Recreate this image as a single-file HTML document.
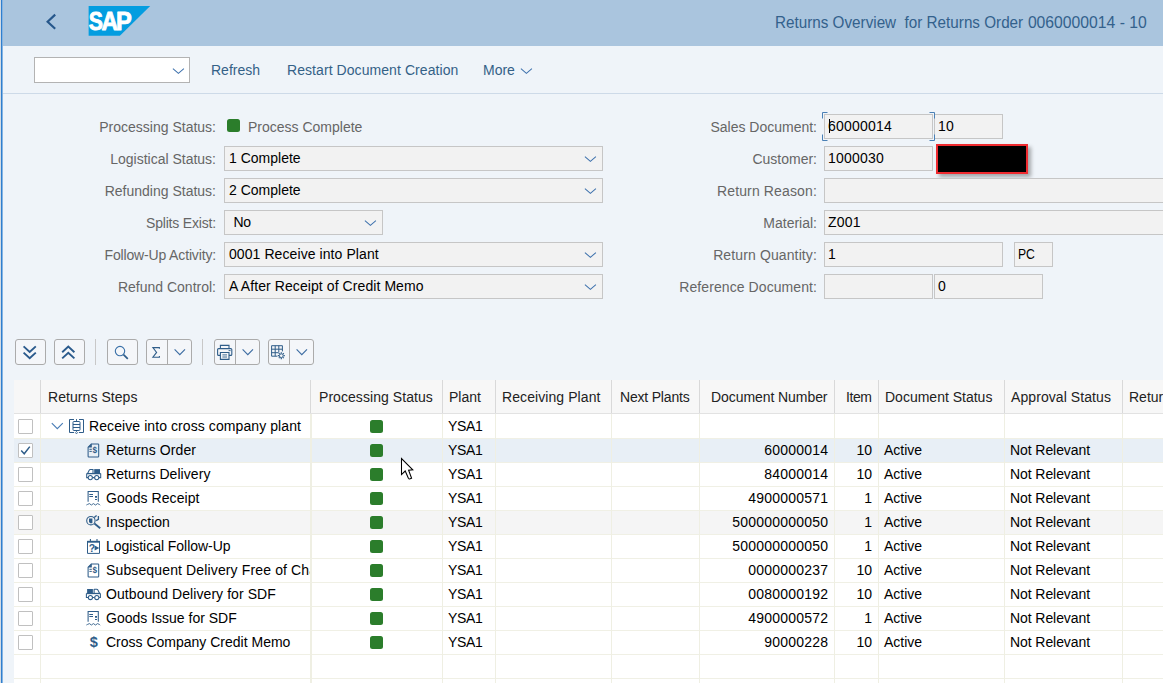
<!DOCTYPE html>
<html>
<head>
<meta charset="utf-8">
<title>Returns Overview</title>
<style>
*{box-sizing:border-box;margin:0;padding:0}
html,body{width:1163px;height:683px;overflow:hidden;background:#eff4f9}
body{font-family:"Liberation Sans",sans-serif;font-size:14px;color:#000;position:relative}
.abs{position:absolute}
#edge0{left:0;top:0;width:3px;height:683px;background:#d3dbe4}
#edge1{left:1px;top:0;width:2px;height:683px;background:linear-gradient(to right,#2f7fce 0,#2f7fce 1px,#86b4e2 1px,#86b4e2 2px)}
#hdr{left:3px;top:0;width:1160px;height:46px;background:#aac5de}
.ttl{top:11.5px;font-size:16.5px;color:#33618c;white-space:pre;line-height:20px}
#tbar{left:3px;top:46px;width:1160px;height:48px;background:#eff4f9;border-bottom:1px solid #cddae8}
#cmd{left:34px;top:57px;width:156px;height:26px;background:#fff;border:1px solid #b3b3b3}
.tb{top:61px;color:#346187;font-size:14px;line-height:18px;white-space:nowrap}
.lbl{color:#666;text-align:right;white-space:nowrap;line-height:18px;font-size:14px}
.sel{background:#f2f2f2;border:1px solid #c6c6c6;height:25px;line-height:22px;padding-left:4px;white-space:nowrap;font-size:14px}
.inp{background:#f2f2f2;border:1px solid #c6c6c6;height:25px;line-height:22px;padding-left:3px;white-space:nowrap;font-size:14px;overflow:hidden;letter-spacing:0.22px}
.gsq{width:13px;height:13px;background:#2b7d2b;border-radius:2.5px}
.btn{top:339px;height:26px;border:1px solid #ababab;border-radius:3px;background:#f4f6f9}
.vsep{top:339px;width:1px;height:26px;background:#c8c8c8}
#grid{left:14px;top:380px;width:1149px;height:303px;background:#fff;overflow:hidden}
#ghead{left:0;top:0;width:1149px;height:34px;background:#f7f7f7;border-bottom:1px solid #e2e2e2}
.th{top:8px;line-height:18px;white-space:nowrap;font-size:14px;color:#222}
.row{left:0;width:1149px;height:24px;border-bottom:1px solid #f0f0e5}
.row.selr{background:#e8eff6}
.row.alt{background:#f5f5f5}
.vl{top:34px;width:1px;height:269px;background:#efefe3}
.vlh{top:0;width:1px;height:33px;background:#d9d9d9}
.c{top:2px;line-height:18px;white-space:nowrap;font-size:14px}
.cb{left:4px;top:4px;width:15px;height:15px;border:1px solid #c0c0c0;background:#fff;border-radius:1px}
</style>
</head>
<body>
<div class="abs" id="edge0"></div>
<div class="abs" id="edge1"></div>
<div class="abs" id="hdr"></div>
<div class="abs" id="tbar"></div>
<svg class="abs" style="left:44px;top:12px" width="16" height="20" viewBox="0 0 16 20"><path d="M11.2 2.6 L3.6 9.7 L11.2 16.8" fill="none" stroke="#26578b" stroke-width="2.15" stroke-linecap="butt" stroke-linejoin="miter"/></svg>
<svg class="abs" style="left:88px;top:6px" width="63" height="31" viewBox="0 0 63 31"><path d="M0.6 0 H62.2 L31.9 29.8 H0.6 Z" fill="#039de0"/><g font-family="Liberation Sans, sans-serif" font-weight="bold" font-size="26.6" fill="#fff" stroke="#fff" stroke-width="0.9" stroke-linejoin="round"><text transform="translate(0.7,24) scale(0.80,1)">S</text><text transform="translate(13.4,24) scale(0.86,1)">A</text><text transform="translate(27.9,24) scale(0.89,1)">P</text></g></svg>
<div class="abs ttl" style="left:775.4px;transform:scaleX(0.9237);transform-origin:0 50%">Returns Overview  for Returns Order </div><div class="abs ttl" style="right:16.3px;transform:scaleX(0.9529);transform-origin:100% 50%">0060000014 - 10</div>

<div class="abs" id="cmd"></div>
<svg class="abs" style="left:171px;top:64.5px" width="14" height="12" viewBox="0 0 14 12"><path d="M1.9 3.6 L7.4 8.3 L12.9 3.6" fill="none" stroke="#3f72ad" stroke-width="1.05"/></svg>
<div class="abs tb" style="left:211px">Refresh</div>
<div class="abs tb" style="left:287px;letter-spacing:0.07px">Restart Document Creation</div>
<div class="abs tb" style="left:483px">More</div>
<svg class="abs" style="left:519px;top:64.5px" width="14" height="12" viewBox="0 0 14 12"><path d="M1.9 3.6 L7.4 8.3 L12.9 3.6" fill="none" stroke="#3f72ad" stroke-width="1.05"/></svg>

<div class="abs lbl" style="left:40px;width:176px;top:118px">Processing Status:</div>
<div class="abs gsq" style="left:227px;top:119px"></div>
<div class="abs" style="left:248px;top:118px;color:#666;line-height:18px;white-space:nowrap">Process Complete</div>
<div class="abs lbl" style="left:40px;width:176px;top:150px">Logistical Status:</div>
<div class="abs sel" style="left:224px;top:146px;width:379px">1 Complete</div>
<div class="abs lbl" style="left:40px;width:176px;top:182px">Refunding Status:</div>
<div class="abs sel" style="left:224px;top:178px;width:379px">2 Complete</div>
<div class="abs lbl" style="left:40px;width:176px;top:214px;letter-spacing:-0.18px">Splits Exist:</div>
<div class="abs sel" style="left:224px;top:210px;width:159px;padding-left:8.5px;letter-spacing:-0.4px">No</div>
<div class="abs lbl" style="left:40px;width:176px;top:246px;letter-spacing:-0.15px">Follow-Up Activity:</div>
<div class="abs sel" style="left:224px;top:242px;width:379px;letter-spacing:0.08px">0001 Receive into Plant</div>
<div class="abs lbl" style="left:40px;width:176px;top:278px">Refund Control:</div>
<div class="abs sel" style="left:224px;top:274px;width:379px;letter-spacing:0.08px">A After Receipt of Credit Memo</div>
<svg class="abs" style="left:583px;top:153px" width="14" height="12" viewBox="0 0 14 12"><path d="M1.9 3.6 L7.4 8.3 L12.9 3.6" fill="none" stroke="#3f72ad" stroke-width="1.05"/></svg>
<svg class="abs" style="left:583px;top:185px" width="14" height="12" viewBox="0 0 14 12"><path d="M1.9 3.6 L7.4 8.3 L12.9 3.6" fill="none" stroke="#3f72ad" stroke-width="1.05"/></svg>
<svg class="abs" style="left:363px;top:217px" width="14" height="12" viewBox="0 0 14 12"><path d="M1.9 3.6 L7.4 8.3 L12.9 3.6" fill="none" stroke="#3f72ad" stroke-width="1.05"/></svg>
<svg class="abs" style="left:583px;top:249px" width="14" height="12" viewBox="0 0 14 12"><path d="M1.9 3.6 L7.4 8.3 L12.9 3.6" fill="none" stroke="#3f72ad" stroke-width="1.05"/></svg>
<svg class="abs" style="left:583px;top:281px" width="14" height="12" viewBox="0 0 14 12"><path d="M1.9 3.6 L7.4 8.3 L12.9 3.6" fill="none" stroke="#3f72ad" stroke-width="1.05"/></svg>
<div class="abs lbl" style="left:640px;width:177px;top:118px">Sales Document:</div>
<div class="abs inp" style="left:824px;top:114px;width:109px">60000014</div>
<div class="abs inp" style="left:934px;top:114px;width:69px">10</div>
<svg class="abs" style="left:821px;top:111px" width="115" height="31" viewBox="0 0 115 31"><path d="M6.5 1.5 H1.5 V7.5 M1.5 23.5 V29.5 H6.5 M108.5 1.5 H113.5 V7.5 M113.5 23.5 V29.5 H108.5" fill="none" stroke="#4a80b5" stroke-width="1"/><path d="M8.5 8 V22" stroke="#000" stroke-width="1"/></svg>
<div class="abs lbl" style="left:640px;width:177px;top:150px">Customer:</div>
<div class="abs inp" style="left:824px;top:146px;width:109px">1000030</div>
<div class="abs" style="left:936px;top:144px;width:92px;height:30px;background:#000;border:2px solid #ef2b30;box-shadow:3px 3px 4px rgba(0,0,0,0.32)"></div>
<div class="abs lbl" style="left:640px;width:177px;top:182px;letter-spacing:0.14px">Return Reason:</div>
<div class="abs inp" style="left:824px;top:178px;width:345px"></div>
<div class="abs lbl" style="left:640px;width:177px;top:214px">Material:</div>
<div class="abs inp" style="left:824px;top:210px;width:345px">Z001</div>
<div class="abs lbl" style="left:640px;width:177px;top:246px;letter-spacing:0.12px">Return Quantity:</div>
<div class="abs inp" style="left:824px;top:242px;width:179px">1</div>
<div class="abs inp" style="left:1014px;top:242px;width:39px;letter-spacing:0"><span style="display:inline-block;transform:scaleX(0.87);transform-origin:0 50%">PC</span></div>
<div class="abs lbl" style="left:640px;width:177px;top:278px;letter-spacing:0.08px">Reference Document:</div>
<div class="abs inp" style="left:824px;top:274px;width:109px"></div>
<div class="abs inp" style="left:934px;top:274px;width:109px">0</div>


<div class="abs btn" style="left:15px;width:31px"></div>
<div class="abs btn" style="left:54px;width:31px"></div>
<div class="abs vsep" style="left:95px"></div>
<div class="abs btn" style="left:107px;width:31px"></div>
<div class="abs btn" style="left:146px;width:46px"></div><div class="abs vsep" style="left:167px;background:#ababab"></div>
<div class="abs vsep" style="left:202px"></div>
<div class="abs btn" style="left:214px;width:46px"></div><div class="abs vsep" style="left:235px;background:#ababab"></div>
<div class="abs btn" style="left:268px;width:46px"></div><div class="abs vsep" style="left:289px;background:#ababab"></div>
<svg class="abs" style="left:0;top:339px" width="330" height="26" viewBox="0 339 330 26">
<g fill="none" stroke="#2a5a8c" stroke-width="1.9">
<path d="M23.6 346.4 L29.7 352 L35.8 346.4 M23.6 352.6 L29.7 358.2 L35.8 352.6"/>
<path d="M62.2 352.2 L68.3 346.6 L74.4 352.2 M62.2 358.4 L68.3 352.8 L74.4 358.4"/>
</g>
<g fill="none" stroke="#2f5d89" stroke-width="1.3">
<circle cx="120" cy="351.1" r="4.7" stroke-width="1.1" stroke="#3a70a8"/><path d="M123.5 354.7 L127.8 358.8" stroke-width="1.7"/>
</g>
<path d="M159.4 348.8 V347.6 H152.9 L156.6 352.4 L152.9 357.2 H159.4 V356" fill="none" stroke="#2f5d89" stroke-width="1.1"/>
<path d="M174.60000000000002 349.4 L179.8 354.6 L185.0 349.4" fill="none" stroke="#3d6ca2" stroke-width="1.15"/><path d="M242.60000000000002 349.4 L247.8 354.6 L253.0 349.4" fill="none" stroke="#3d6ca2" stroke-width="1.15"/><path d="M296.6 349.4 L301.8 354.6 L307.0 349.4" fill="none" stroke="#3d6ca2" stroke-width="1.15"/>
<g fill="none" stroke="#2f5d89" stroke-width="1.1">
<path d="M220.4 355.4 H218.6 Q217.6 355.4 217.6 354.4 V349.6 Q217.6 348.6 218.6 348.6 H230.8 Q231.8 348.6 231.8 349.6 V354.4 Q231.8 355.4 230.8 355.4 H229"/>
<path d="M220.4 348.4 V345.4 H229 V348.4"/>
<path d="M220.4 352.5 H229 V359.4 H220.4 Z"/>
<path d="M222.4 354.9 H227 M222.4 357 H227 M228.6 350.6 H230.6" stroke-width="0.9"/>
</g>
<g fill="none" stroke="#2f5d89" stroke-width="1">
<path d="M282.4 351.4 V345.7 H271.6 V356.2 H277.4 M275.2 345.7 V356.2 M278.8 345.7 V352.4 M271.6 349.2 H282.4 M271.6 352.7 H278.6"/>
<circle cx="281.3" cy="355.7" r="1.9"/>
<path d="M281.3 352.2 V353.4 M281.3 358 V359.2 M277.8 355.7 H279 M283.6 355.7 H284.8 M278.8 353.2 L279.7 354.1 M282.9 357.3 L283.8 358.2 M283.8 353.2 L282.9 354.1 M279.7 357.3 L278.8 358.2" stroke-width="1.2"/>
</g>
</svg>

<!--GRID_START-->
<div class="abs" id="grid">
<div class="abs" id="ghead">
<div class="abs th" style="left:34px;letter-spacing:0.06px">Returns Steps</div>
<div class="abs th" style="left:305px;letter-spacing:0.06px">Processing Status</div>
<div class="abs th" style="left:435px">Plant</div>
<div class="abs th" style="left:488px;letter-spacing:0.08px">Receiving Plant</div>
<div class="abs th" style="left:606px;letter-spacing:-0.19px">Next Plants</div>
<div class="abs th" style="left:697px;letter-spacing:-0.07px">Document Number</div>
<div class="abs th" style="left:832px;letter-spacing:-0.43px">Item</div>
<div class="abs th" style="left:871px">Document Status</div>
<div class="abs th" style="left:997px;letter-spacing:0.08px">Approval Status</div>
<div class="abs th" style="left:1115px">Returns Refund Code</div>
</div>
<div class="row abs" style="top:35px">
<div class="abs cb"></div>
<svg class="abs" style="left:30px;top:0" width="24" height="24" viewBox="30 0 24 24"><path d="M37.8 8.2 L43.3 13.6 L48.8 8.2" fill="none" stroke="#4a7db6" stroke-width="1.15"/></svg>
<svg class="abs" style="left:30px;top:0" width="62" height="24" viewBox="30 0 62 24"><g fill="none" stroke="#2f5d89" stroke-width="1"><path d="M60 4.5 H55.5 V17.5 H60 M65 4.5 H69.5 V17.5 H65"/><rect x="59" y="6.5" width="7" height="9" rx="0.8"/><path d="M59 9.5 H66 M59 12.5 H66"/><path d="M62.5 4 V6.5 M62.5 15.5 V16.6 M62.5 16.6 L63.6 17.7 L62.5 18.8 L61.4 17.7 Z" stroke-width="0.9"/></g></svg>
<div class="abs c" style="left:75px;width:220px;overflow:hidden;letter-spacing:0.083px">Receive into cross company plant</div>
<div class="abs gsq" style="left:356px;top:5px"></div>
<div class="abs c" style="left:434px;letter-spacing:-0.35px">YSA1</div>
</div>
<div class="row abs selr" style="top:59px">
<div class="abs" style="left:0;top:0;width:26px;height:23px;background:#e8eff6"></div>
<div class="abs cb"></div>
<svg class="abs" style="left:4px;top:4px" width="15" height="15" viewBox="0 0 15 15"><path d="M3.2 7.6 L6.2 10.8 L11.8 3.6" fill="none" stroke="#2f5d89" stroke-width="1.5"/></svg>
<svg class="abs" style="left:30px;top:0" width="62" height="24" viewBox="30 0 62 24"><path d="M77.3 4.9 H84 Q84.7 4.9 84.7 5.6 V17.3 Q84.7 18 84 18 H74.8 Q74.1 18 74.1 17.3 V8.2 Z" fill="none" stroke="#2f5d89" stroke-width="1.05"/><path d="M77.8 4.6 V8.6 H73.8 Z" fill="#2f5d89"/><path d="M75.4 10.3 H77.8 M75.4 12.4 H77.8" stroke="#2f5d89" stroke-width="1"/><text x="78.5" y="13.5" font-family="Liberation Sans, sans-serif" font-weight="bold" font-size="8.2" fill="#2f5d89">$</text></svg>
<div class="abs c" style="left:92px;width:203.5px;overflow:hidden;letter-spacing:0.107px">Returns Order</div>
<div class="abs gsq" style="left:356px;top:5px"></div>
<div class="abs c" style="left:434px;letter-spacing:-0.35px">YSA1</div>
<div class="abs c" style="left:680px;width:134.2px;text-align:right;letter-spacing:0.2px">60000014</div>
<div class="abs c" style="left:822px;width:36px;text-align:right">10</div>
<div class="abs c" style="left:870px">Active</div>
<div class="abs c" style="left:996px;letter-spacing:-0.078px">Not Relevant</div>
</div>
<div class="row abs" style="top:83px">
<div class="abs cb"></div>
<svg class="abs" style="left:30px;top:0" width="62" height="24" viewBox="30 0 62 24"><g fill="none" stroke="#2f5d89" stroke-width="1.05"><path d="M79 6.4 H76.4 Q75.6 6.4 75.2 7.2 L73.6 10.4 M79 6 V10.4"/><path d="M72.7 10.6 H86.7" stroke-width="1.3"/><path d="M72.7 10.6 V14.6 H74 M78.6 14.6 H80.4 M85 14.6 H86.7 V10.6"/><circle cx="76.3" cy="14.6" r="2.1"/><circle cx="82.7" cy="14.6" r="2.1"/></g><path d="M80.2 6.1 H86 V10.4 H80.2 Z" fill="#2f5d89"/></svg>
<div class="abs c" style="left:92px;width:203.5px;overflow:hidden;letter-spacing:0.063px">Returns Delivery</div>
<div class="abs gsq" style="left:356px;top:5px"></div>
<div class="abs c" style="left:434px;letter-spacing:-0.35px">YSA1</div>
<div class="abs c" style="left:680px;width:134.2px;text-align:right;letter-spacing:0.2px">84000014</div>
<div class="abs c" style="left:822px;width:36px;text-align:right">10</div>
<div class="abs c" style="left:870px">Active</div>
<div class="abs c" style="left:996px;letter-spacing:-0.078px">Not Relevant</div>
</div>
<div class="row abs" style="top:107px">
<div class="abs cb"></div>
<svg class="abs" style="left:30px;top:0" width="62" height="24" viewBox="30 0 62 24"><g fill="none" stroke="#2f5d89" stroke-width="1.05"><path d="M74.1 14.8 V4.5 H84.3 V14.8"/><path d="M72.4 18 L73.6 17.4 L75.4 16.6 L77.4 18 L79.4 16.6 L81.5 18 L83.6 16.6 L85.6 17.6 L86.2 18.2" stroke-width="0.9"/><path d="M75.3 7.4 H79 M75.3 9.5 H79 M81 12.5 H83"/><path d="M81 9.9 H83" stroke-width="1.8"/></g></svg>
<div class="abs c" style="left:92px;width:203.5px;overflow:hidden;letter-spacing:0.069px">Goods Receipt</div>
<div class="abs gsq" style="left:356px;top:5px"></div>
<div class="abs c" style="left:434px;letter-spacing:-0.35px">YSA1</div>
<div class="abs c" style="left:680px;width:134.2px;text-align:right;letter-spacing:0.2px">4900000571</div>
<div class="abs c" style="left:822px;width:36px;text-align:right">1</div>
<div class="abs c" style="left:870px">Active</div>
<div class="abs c" style="left:996px;letter-spacing:-0.078px">Not Relevant</div>
</div>
<div class="row abs alt" style="top:131px">
<div class="abs cb"></div>
<svg class="abs" style="left:30px;top:0" width="62" height="24" viewBox="30 0 62 24"><g fill="none" stroke="#2f5d89"><circle cx="76.9" cy="9.7" r="4.2" stroke-width="1.1"/><path d="M80.4 12.6 L86.2 17.2" stroke-width="1.9"/><path d="M80.2 6.6 L82.6 4.6 M84.4 5 V8.4 L82.2 9.6" stroke-width="1.3"/></g><path d="M75 7.6 H78.4 V12.2 H76.4 Q75 12 75 10.6 Z" fill="#2f5d89"/></svg>
<div class="abs c" style="left:92px;width:203.5px;overflow:hidden">Inspection</div>
<div class="abs gsq" style="left:356px;top:5px"></div>
<div class="abs c" style="left:434px;letter-spacing:-0.35px">YSA1</div>
<div class="abs c" style="left:680px;width:134.2px;text-align:right;letter-spacing:0.2px">500000000050</div>
<div class="abs c" style="left:822px;width:36px;text-align:right">1</div>
<div class="abs c" style="left:870px">Active</div>
<div class="abs c" style="left:996px;letter-spacing:-0.078px">Not Relevant</div>
</div>
<div class="row abs" style="top:155px">
<div class="abs cb"></div>
<svg class="abs" style="left:30px;top:0" width="62" height="24" viewBox="30 0 62 24"><g fill="none" stroke="#2f5d89"><path d="M73.5 6.4 H85.5 V18.4 H73.5 Z" stroke-width="1"/><path d="M73 6.8 H86" stroke-width="1.8"/><path d="M76.4 4.1 V6.4 M83 4.1 V6.4" stroke-width="1.1"/></g><text x="74.7" y="17.4" font-family="Liberation Sans, sans-serif" font-weight="bold" font-size="10.4" fill="#2f5d89">?</text><path d="M80.6 10.4 L85.3 13 L80.6 15.6 Z" fill="#2f5d89"/></svg>
<div class="abs c" style="left:92px;width:203.5px;overflow:hidden;letter-spacing:-0.039px">Logistical Follow-Up</div>
<div class="abs gsq" style="left:356px;top:5px"></div>
<div class="abs c" style="left:434px;letter-spacing:-0.35px">YSA1</div>
<div class="abs c" style="left:680px;width:134.2px;text-align:right;letter-spacing:0.2px">500000000050</div>
<div class="abs c" style="left:822px;width:36px;text-align:right">1</div>
<div class="abs c" style="left:870px">Active</div>
<div class="abs c" style="left:996px;letter-spacing:-0.078px">Not Relevant</div>
</div>
<div class="row abs" style="top:179px">
<div class="abs cb"></div>
<svg class="abs" style="left:30px;top:0" width="62" height="24" viewBox="30 0 62 24"><path d="M77.3 4.9 H84 Q84.7 4.9 84.7 5.6 V17.3 Q84.7 18 84 18 H74.8 Q74.1 18 74.1 17.3 V8.2 Z" fill="none" stroke="#2f5d89" stroke-width="1.05"/><path d="M77.8 4.6 V8.6 H73.8 Z" fill="#2f5d89"/><path d="M75.4 10.3 H77.8 M75.4 12.4 H77.8" stroke="#2f5d89" stroke-width="1"/><text x="78.5" y="13.5" font-family="Liberation Sans, sans-serif" font-weight="bold" font-size="8.2" fill="#2f5d89">$</text></svg>
<div class="abs c" style="left:92px;width:203.5px;overflow:hidden;letter-spacing:0.135px">Subsequent Delivery Free of Charge</div>
<div class="abs gsq" style="left:356px;top:5px"></div>
<div class="abs c" style="left:434px;letter-spacing:-0.35px">YSA1</div>
<div class="abs c" style="left:680px;width:134.2px;text-align:right;letter-spacing:0.2px">0000000237</div>
<div class="abs c" style="left:822px;width:36px;text-align:right">10</div>
<div class="abs c" style="left:870px">Active</div>
<div class="abs c" style="left:996px;letter-spacing:-0.078px">Not Relevant</div>
</div>
<div class="row abs" style="top:203px">
<div class="abs cb"></div>
<svg class="abs" style="left:30px;top:0" width="62" height="24" viewBox="30 0 62 24"><g transform="translate(159.1,-0.1) scale(-1,1)"><g fill="none" stroke="#2f5d89" stroke-width="1.05"><path d="M79 6.4 H76.4 Q75.6 6.4 75.2 7.2 L73.6 10.4 M79 6 V10.4"/><path d="M72.7 10.6 H86.7" stroke-width="1.3"/><path d="M72.7 10.6 V14.6 H74 M78.6 14.6 H80.4 M85 14.6 H86.7 V10.6"/><circle cx="76.3" cy="14.6" r="2.1"/><circle cx="82.7" cy="14.6" r="2.1"/></g><path d="M80.2 6.1 H86 V10.4 H80.2 Z" fill="#2f5d89"/></g></svg>
<div class="abs c" style="left:92px;width:203.5px;overflow:hidden;letter-spacing:0.073px">Outbound Delivery for SDF</div>
<div class="abs gsq" style="left:356px;top:5px"></div>
<div class="abs c" style="left:434px;letter-spacing:-0.35px">YSA1</div>
<div class="abs c" style="left:680px;width:134.2px;text-align:right;letter-spacing:0.2px">0080000192</div>
<div class="abs c" style="left:822px;width:36px;text-align:right">10</div>
<div class="abs c" style="left:870px">Active</div>
<div class="abs c" style="left:996px;letter-spacing:-0.078px">Not Relevant</div>
</div>
<div class="row abs" style="top:227px">
<div class="abs cb"></div>
<svg class="abs" style="left:30px;top:0" width="62" height="24" viewBox="30 0 62 24"><g fill="none" stroke="#2f5d89" stroke-width="1.05"><path d="M74.1 14.8 V4.5 H84.3 V14.8"/><path d="M72.4 18 L73.6 17.4 L75.4 16.6 L77.4 18 L79.4 16.6 L81.5 18 L83.6 16.6 L85.6 17.6 L86.2 18.2" stroke-width="0.9"/><path d="M75.3 7.4 H79 M75.3 9.5 H79 M81 12.5 H83"/><path d="M81 9.9 H83" stroke-width="1.8"/></g></svg>
<div class="abs c" style="left:92px;width:203.5px;overflow:hidden">Goods Issue for SDF</div>
<div class="abs gsq" style="left:356px;top:5px"></div>
<div class="abs c" style="left:434px;letter-spacing:-0.35px">YSA1</div>
<div class="abs c" style="left:680px;width:134.2px;text-align:right;letter-spacing:0.2px">4900000572</div>
<div class="abs c" style="left:822px;width:36px;text-align:right">1</div>
<div class="abs c" style="left:870px">Active</div>
<div class="abs c" style="left:996px;letter-spacing:-0.078px">Not Relevant</div>
</div>
<div class="row abs" style="top:251px">
<div class="abs cb"></div>
<svg class="abs" style="left:30px;top:0" width="62" height="24" viewBox="30 0 62 24"><text x="75.7" y="16.4" font-family="Liberation Sans, sans-serif" font-weight="bold" font-size="14.5" fill="#2f5d89">$</text></svg>
<div class="abs c" style="left:92px;width:203.5px;overflow:hidden">Cross Company Credit Memo</div>
<div class="abs gsq" style="left:356px;top:5px"></div>
<div class="abs c" style="left:434px;letter-spacing:-0.35px">YSA1</div>
<div class="abs c" style="left:680px;width:134.2px;text-align:right;letter-spacing:0.2px">90000228</div>
<div class="abs c" style="left:822px;width:36px;text-align:right">10</div>
<div class="abs c" style="left:870px">Active</div>
<div class="abs c" style="left:996px;letter-spacing:-0.078px">Not Relevant</div>
</div>
<div class="row abs" style="top:275px"></div>
<div class="row abs" style="top:299px"></div>
<div class="abs vl" style="left:26px"></div><div class="abs vlh" style="left:26px"></div>
<div class="abs vl" style="left:296px;width:2px"></div><div class="abs vlh" style="left:296px"></div>
<div class="abs vl" style="left:428px"></div><div class="abs vlh" style="left:428px"></div>
<div class="abs vl" style="left:481px"></div><div class="abs vlh" style="left:481px"></div>
<div class="abs vl" style="left:597px"></div><div class="abs vlh" style="left:597px"></div>
<div class="abs vl" style="left:685px"></div><div class="abs vlh" style="left:685px"></div>
<div class="abs vl" style="left:820px"></div><div class="abs vlh" style="left:820px"></div>
<div class="abs vl" style="left:864px"></div><div class="abs vlh" style="left:864px"></div>
<div class="abs vl" style="left:990px"></div><div class="abs vlh" style="left:990px"></div>
<div class="abs vl" style="left:1108px"></div><div class="abs vlh" style="left:1108px"></div>
</div>
<!--GRID_END-->
<svg class="abs" style="left:398px;top:455px" width="20" height="28" viewBox="398 455 20 28"><path d="M401.5 458.6 V474.6 L405.2 471 L408.4 478.2 Q409 479.2 410.2 478.8 L411.6 478.2 L408.6 470.2 L412.8 469.8 Z" fill="#fff" stroke="#000" stroke-width="1.05" stroke-linejoin="miter"/></svg>
</body>
</html>
